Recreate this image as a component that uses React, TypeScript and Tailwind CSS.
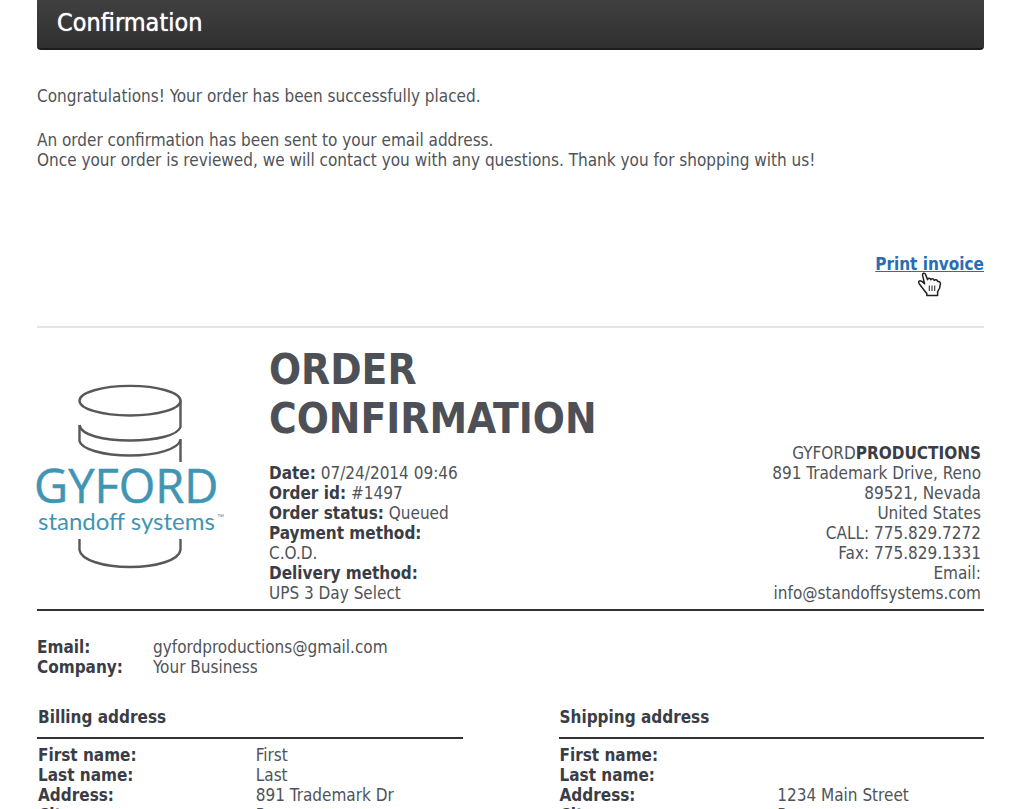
import React from 'react'

type Field = { label: string; value: string }

const billing: Field[] = [
  { label: 'First name:', value: 'First' },
  { label: 'Last name:', value: 'Last' },
  { label: 'Address:', value: '891 Trademark Dr' },
  { label: 'City:', value: 'Reno' },
]

const shipping: Field[] = [
  { label: 'First name:', value: '' },
  { label: 'Last name:', value: '' },
  { label: 'Address:', value: '1234 Main Street' },
  { label: 'City:', value: 'Reno' },
]

const Logo = () => (
  <svg viewBox="-4 0 204 196" className="-ml-1 w-[204px] h-[196px]" role="img" aria-label="Gyford standoff systems">
    <g fill="none" stroke="#58585a" strokeWidth="2.4">
      <ellipse cx="93" cy="23.7" rx="50.5" ry="14.8" />
      <path d="M143.5 23.7V50C141 58 120 63.5 93 63.5C66 63.5 44 58 42.5 48" />
      <path d="M42.5 48V64C44 72 66 78.5 93 78.5C120 78.5 141 72 143.5 63" />
      <path d="M143.5 62V85" />
      <path d="M42.5 162V173C44 183 66 190 93 190C120 190 142 183 143.5 173V162" />
    </g>
    <g fill="#3f95b3">
      <text x="-3" y="126" fontSize="47" stroke="#3f95b3" strokeWidth=".5" fontFamily="'Open Sans', sans-serif">GYFORD</text>
      <text x="1" y="153" fontSize="24" fontFamily="Lato, sans-serif">standoff systems</text>
      <text x="180" y="142" fontSize="7" fontFamily="'Liberation Sans', sans-serif">™</text>
    </g>
  </svg>
)

const HandCursor = () => (
  <svg viewBox="0 0 24 26" className="absolute left-[43px] top-[18px] w-6 h-[26px]" aria-hidden="true">
    <path
      d="M5.6 17.5L1.4 12C.2 10.4 .6 8.8 2 8.8C3.6 8.8 5 10.2 6.6 11.8L4.6 3.4C4.2 1 6.8 .4 7.6 2.6L9.6 7.6C9.8 5.8 12.2 5.8 12.8 7.8C13.4 6.2 15.6 6.4 16.2 8.4C17.2 7.2 19.2 7.6 19.8 9.6C21.2 9.2 22.4 10 22.4 11.6C22.4 15 21.4 17.4 19.6 19.8V23.6H8.8V21.4C7.8 20.4 6.6 19 5.6 17.5Z"
      fill="#fff"
      stroke="#222"
      strokeWidth="1.5"
      strokeLinejoin="round"
    />
    <path d="M11.3 13.5V19M14 13.5V19M16.7 13.5V19" stroke="#333" strokeWidth="1.1" />
  </svg>
)

const AddressBlock = ({ title, fields }: { title: string; fields: Field[] }) => (
  <section>
    <h2 className="pl-px pb-2.5 border-b-2 border-[#333] font-bold text-[#3a3d45]">{title}</h2>
    <table className="w-full mt-1.5">
      <tbody>
        {fields.map((field) => (
          <tr key={field.label}>
            <th scope="row" className="w-1/2 pl-px text-left font-bold text-[#3a3d45]">{field.label}</th>
            <td className="pl-1.5">{field.value}</td>
          </tr>
        ))}
      </tbody>
    </table>
  </section>
)

const App = () => {
  return (
    <main className="pl-[37px] pr-10 bg-white text-[#505358] text-[17px] leading-5 font-['DejaVu_Sans_Condensed','DejaVu_Sans',sans-serif]">
      <header className="h-[50px] px-5 pt-[9px] rounded-b-sm border-b-2 border-[#1c1c1c] bg-linear-to-b from-[#404040] to-[#303030]">
        <h1 className="text-[25px] leading-7 font-normal text-white text-shadow-[0_0_1px_#fff]">Confirmation</h1>
      </header>

      <div className="mt-9">
        <p>Congratulations! Your order has been successfully placed.</p>
        <p className="mt-6">
          An order confirmation has been sent to your email address.
          <br />
          Once your order is reviewed, we will contact you with any questions. Thank you for shopping with us!
        </p>
      </div>

      <div className="mt-[84px] flex justify-end">
        <span className="relative">
          <a href="#invoice" className="font-bold underline text-[#2a6cb5]">Print invoice</a>
          <HandCursor />
        </span>
      </div>

      <section className="mt-[52px] pt-[17px] pb-1.5 flex border-t-2 border-[#e4e4e4] border-b-2 border-b-[#333]">
        <div className="w-[232px] shrink-0 pt-8">
          <Logo />
        </div>
        <div className="w-[340px] shrink-0">
          <h2 className="text-[42px] leading-[49px] font-bold text-[#4d5157]">ORDER CONFIRMATION</h2>
          <div className="mt-5">
            <p><b className="text-[#3a3d45]">Date:</b> 07/24/2014 09:46</p>
            <p><b className="text-[#3a3d45]">Order id:</b> #1497</p>
            <p><b className="text-[#3a3d45]">Order status:</b> Queued</p>
            <p><b className="text-[#3a3d45]">Payment method:</b><br />C.O.D.</p>
            <p><b className="text-[#3a3d45]">Delivery method:</b><br />UPS 3 Day Select</p>
          </div>
        </div>
        <address className="ml-auto pr-[3px] self-end text-right not-italic">
          GYFORD<b className="text-[#3a3d45]">PRODUCTIONS</b><br />
          891 Trademark Drive, Reno<br />
          89521, Nevada<br />
          United States<br />
          CALL: 775.829.7272<br />
          Fax: 775.829.1331<br />
          Email:<br />
          info@standoffsystems.com
        </address>
      </section>

      <table className="mt-[26px]">
        <tbody>
          <tr>
            <th scope="row" className="w-[116px] text-left font-bold text-[#3a3d45]">Email:</th>
            <td>gyfordproductions@gmail.com</td>
          </tr>
          <tr>
            <th scope="row" className="text-left font-bold text-[#3a3d45]">Company:</th>
            <td>Your Business</td>
          </tr>
        </tbody>
      </table>

      <div className="mt-[30px] grid grid-cols-2 gap-24">
        <AddressBlock title="Billing address" fields={billing} />
        <AddressBlock title="Shipping address" fields={shipping} />
      </div>
    </main>
  )
}

export default App
